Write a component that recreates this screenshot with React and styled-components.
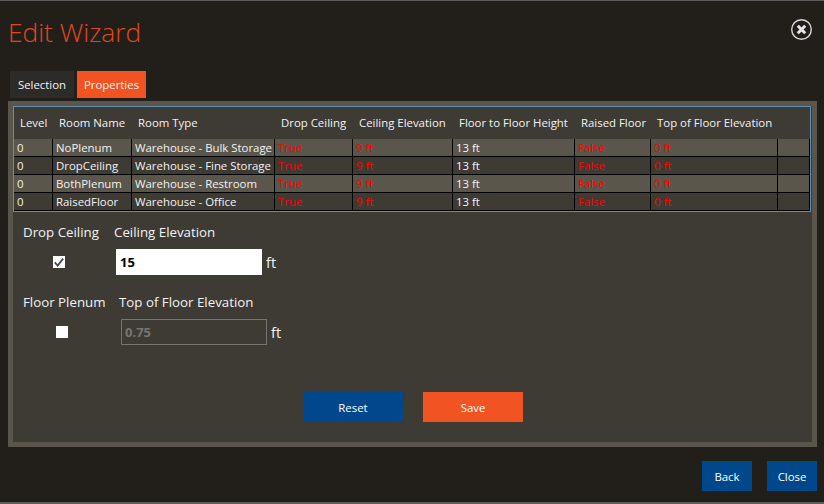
import React from "react";
import styled, { createGlobalStyle } from "styled-components";

const Global = createGlobalStyle`
  html, body { margin: 0; padding: 0; background: #221f1b; }
  * { box-sizing: border-box; }
`;

const Page = styled.div`
  width: 824px;
  height: 504px;
  display: flex;
  flex-direction: column;
  background: #221f1b;
  border-top: 1px solid #5c5c5c;
  border-bottom: 2px solid #5c5c5c;
  font-family: "Open Sans", "Noto Sans", sans-serif;
  font-size: 11.4px;
  color: #f2f2f2;
  overflow: hidden;
`;

const Header = styled.header`
  height: 70px;
  padding: 13px 11px 0 8px;
  display: flex;
  justify-content: space-between;
  align-items: flex-start;
`;

const Title = styled.h1`
  margin: 0;
  font-family: "Open Sans", sans-serif;
  font-size: 26.3px;
  line-height: 36px;
  font-weight: 300;
  color: #e0491f;
`;

const CloseIcon = styled.svg`
  width: 23px;
  height: 23px;
  margin-top: 4px;
`;

const Tabs = styled.nav`
  display: flex;
  gap: 3px;
  padding-left: 10px;
  height: 30px;
`;

const Tab = styled.div`
  width: ${p => p.$w}px;
  height: 27px;
  display: flex;
  align-items: center;
  justify-content: center;
  background: ${p => (p.$active ? "#f15322" : "#2d2b28")};
`;

const Panel = styled.section`
  margin: 0 7px 0 8px;
  height: 346px;
  border: 5px solid #5a564b;
  background: #3e3b35;
  display: flex;
  flex-direction: column;
`;

const GridTable = styled.div`
  border: 1px solid #5f8fb5;
  height: 106px;
  margin-right: 1px;
`;

const COLS = "39px 79px 143px 78px 100px 122px 76px 127px 1fr";

const HeaderRow = styled.div`
  display: grid;
  grid-template-columns: ${COLS};
  height: 32px;
  align-items: center;
  padding-bottom: 1px;
`;

const HeaderCell = styled.div`
  padding-left: 6px;
  white-space: nowrap;
`;

const Row = styled.div`
  display: grid;
  grid-template-columns: ${COLS};
  height: 18px;
  background: ${p => (p.$odd ? "#5a564b" : "#3e3b35")};
  border-bottom: 1px solid #000;
`;

const Cell = styled.div`
  padding-left: 3px;
  line-height: 17px;
  white-space: nowrap;
  overflow: hidden;
  border-right: 1px solid #000;
  color: ${p => (p.$warn ? "#ff0000" : "#f2f2f2")};
`;

const Form = styled.div`
  flex: 1;
  display: flex;
  flex-direction: column;
  padding: 11px 0 0 10px;
`;

const FieldGroup = styled.div`
  display: grid;
  grid-template-columns: ${p => p.$labelW}px auto 1fr;
  column-gap: 15px;
  height: 70px;
  grid-template-rows: 19px 1fr;
`;

const Label = styled.div`
  font-size: 13.3px;
  line-height: 19px;
  white-space: nowrap;
`;

const CheckCell = styled.div`
  display: flex;
  justify-content: center;
  padding: 14px 4px 0 0;
`;

const CheckBox = styled.div`
  width: 12px;
  height: 12px;
  background: #fff;
  display: flex;
`;

const InputRow = styled.div`
  display: flex;
  align-items: flex-start;
  gap: 4px;
  padding: 7px 0 0 2px;
  grid-column: 2 / 4;
`;

const TextInput = styled.div`
  width: 146px;
  height: 26px;
  padding-left: 3px;
  display: flex;
  align-items: center;
  font-size: 13px;
  font-weight: 700;
  background: ${p => (p.$disabled ? "transparent" : "#fff")};
  color: ${p => (p.$disabled ? "#77756f" : "#000")};
  border: 1px solid ${p => (p.$disabled ? "#77756f" : "#fff")};
`;

const Unit = styled.span`
  font-size: 14.5px;
  line-height: 27px;
`;

const Actions = styled.div`
  display: flex;
  justify-content: center;
  gap: 20px;
  padding: 29px 9px 0 0;
`;

const Button = styled.button`
  width: ${p => p.$w}px;
  height: 30px;
  border: 0;
  padding: 0;
  font: inherit;
  color: #fff;
  background: ${p => (p.$accent ? "#f15322" : "#00478b")};
`;

const Footer = styled.footer`
  display: flex;
  justify-content: flex-end;
  gap: 15px;
  padding: 14px 7px 0 0;
`;

const headers = ["Level", "Room Name", "Room Type", "Drop Ceiling", "Ceiling Elevation", "Floor to Floor Height", "Raised Floor", "Top of Floor Elevation"];
const rows = [
  ["NoPlenum", "Warehouse - Bulk Storage"],
  ["DropCeiling", "Warehouse - Fine Storage"],
  ["BothPlenum", "Warehouse - Restroom"],
  ["RaisedFloor", "Warehouse - Office"],
];

export default function App() {
  return (
    <Page>
      <Global />
      <Header>
        <Title>Edit Wizard</Title>
        <CloseIcon viewBox="0 0 23 23" fill="none">
          <circle cx="11.5" cy="11.5" r="9.8" stroke="#d8d8d8" strokeWidth="1.4" />
          <path d="M7.8 7.8l7.4 7.4M15.2 7.8l-7.4 7.4" stroke="#e6e6e6" strokeWidth="3" />
        </CloseIcon>
      </Header>
      <Tabs>
        <Tab $w={64}>Selection</Tab>
        <Tab $w={69} $active>Properties</Tab>
      </Tabs>
      <Panel>
        <GridTable>
          <HeaderRow>
            {headers.map(h => <HeaderCell key={h}>{h}</HeaderCell>)}
          </HeaderRow>
          {rows.map((r, i) => (
            <Row key={r[0]} $odd={i % 2 === 0}>
              <Cell>0</Cell>
              <Cell>{r[0]}</Cell>
              <Cell>{r[1]}</Cell>
              <Cell $warn>True</Cell>
              <Cell $warn>9 ft</Cell>
              <Cell>13 ft</Cell>
              <Cell $warn>False</Cell>
              <Cell $warn>0 ft</Cell>
              <Cell />
            </Row>
          ))}
        </GridTable>
        <Form>
          <FieldGroup $labelW={76}>
            <Label>Drop Ceiling</Label>
            <Label>Ceiling Elevation</Label>
            <span />
            <CheckCell>
              <CheckBox>
                <svg viewBox="0 0 12 12" width="12" height="12" fill="none">
                  <path d="M1.8 6.4l2.8 3.2L10.2 2.6" stroke="#4a4a4a" strokeWidth="1.8" />
                </svg>
              </CheckBox>
            </CheckCell>
            <InputRow>
              <TextInput>15</TextInput>
              <Unit>ft</Unit>
            </InputRow>
          </FieldGroup>
          <FieldGroup $labelW={81}>
            <Label>Floor Plenum</Label>
            <Label>Top of Floor Elevation</Label>
            <span />
            <CheckCell><CheckBox /></CheckCell>
            <InputRow>
              <TextInput $disabled>0.75</TextInput>
              <Unit>ft</Unit>
            </InputRow>
          </FieldGroup>
          <Actions>
            <Button $w={100}>Reset</Button>
            <Button $w={100} $accent>Save</Button>
          </Actions>
        </Form>
      </Panel>
      <Footer>
        <Button $w={50}>Back</Button>
        <Button $w={50}>Close</Button>
      </Footer>
    </Page>
  );
}
